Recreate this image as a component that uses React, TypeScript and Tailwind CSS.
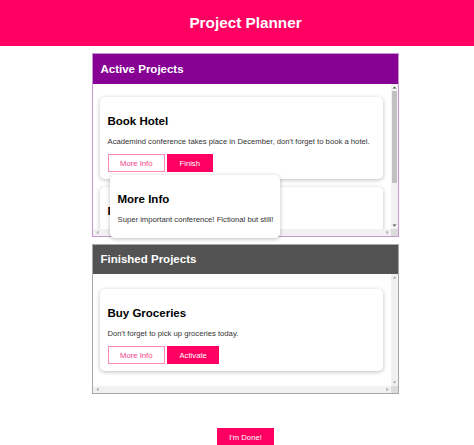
import React from "react";

const Arrow = ({ dir, dark }: { dir: "up" | "down" | "left" | "right"; dark?: boolean }) => {
  const pts: Record<string, string> = {
    up: "3.5,2.5 5.5,4.5 1.5,4.5",
    down: "1.5,2.5 5.5,2.5 3.5,4.5",
    left: "2.5,3.5 4.5,1.5 4.5,5.5",
    right: "2.5,1.5 4.5,3.5 2.5,5.5",
  };
  return (
    <svg width="7" height="7" viewBox="0 0 7 7" className="block shrink-0">
      <polygon points={pts[dir]} fill={dark ? "#505050" : "#a3a3a3"} />
    </svg>
  );
};

type CardProps = { title: string; text: string; action: string };

const Card = ({ title, text, action }: CardProps) => (
  <li className="list-none rounded-[5px] bg-white px-[7.5px] pt-[8px] pb-[7px] shadow-[0_1px_4px_rgba(0,0,0,0.26)]">
    <h2 className="mt-[10px] text-[11.5px] leading-[13px] font-bold text-black">{title}</h2>
    <p className="mt-[9px] text-[7.7px] leading-[9px] text-[#333] whitespace-nowrap">{text}</p>
    <div className="mt-[8px] flex gap-[2px]">
      <button className="h-[18px] border border-[#ff8ab5] bg-white px-[11.5px] text-[7.7px] leading-[9px] text-[#f2438a]">
        More Info
      </button>
      <button className="h-[18px] border border-[#ff0062] bg-[#ff0062] px-[11.5px] text-[7.7px] leading-[9px] text-white">
        {action}
      </button>
    </div>
  </li>
);

export default function App() {
  return (
    <div className="h-[445px] w-full overflow-hidden bg-white font-['Liberation_Sans',Arial,sans-serif]">
      <div className="relative w-[491px]">
        <header className="flex h-[46px] items-center justify-center bg-[#ff0062]">
          <h1 className="text-[15.3px] leading-[18px] font-bold text-white">Project Planner</h1>
        </header>

        {/* Active projects */}
        <section className="mx-auto mt-[7px] w-[307px] border border-[#c795cf]">
          <div className="flex h-[30px] items-center bg-[#850093] px-[7.5px]">
            <h2 className="text-[11.5px] leading-[13px] font-bold text-white">Active Projects</h2>
          </div>
          <div className="grid grid-cols-[1fr_7px] grid-rows-[145px_7px]">
            <div className="overflow-hidden">
              <ul className="flex flex-col gap-[8px] pt-[13px] pl-[7px] pr-[8px]">
                <Card
                  title="Book Hotel"
                  text="Academind conference takes place in December, don't forget to book a hotel."
                  action="Finish"
                />
                <Card title="Finish the Course" text="Finish the course within the next two weeks." action="Finish" />
              </ul>
            </div>
            <div className="flex flex-col bg-[#f1f1f1]">
              <Arrow dir="up" dark />
              <div className="mx-[1px] h-[92px] bg-[#c1c1c1]" />
              <div className="flex-1" />
              <Arrow dir="down" dark />
            </div>
            <div className="flex items-center justify-between bg-[#f1f1f1] pl-[1px]">
              <Arrow dir="left" />
              <Arrow dir="right" />
            </div>
            <div className="bg-[#dcdcdc]" />
          </div>
        </section>

        {/* Finished projects */}
        <section className="mx-auto mt-[7px] w-[307px] border border-[#a8a8a8]">
          <div className="flex h-[29px] items-center bg-[#535353] px-[7.5px]">
            <h2 className="text-[11.5px] leading-[13px] font-bold text-white">Finished Projects</h2>
          </div>
          <div className="grid grid-cols-[1fr_7px] grid-rows-[112px_7px]">
            <div className="overflow-hidden">
              <ul className="flex flex-col pt-[15px] pl-[7px] pr-[8px]">
                <Card title="Buy Groceries" text="Don't forget to pick up groceries today." action="Activate" />
              </ul>
            </div>
            <div className="flex flex-col justify-between bg-[#f1f1f1]">
              <Arrow dir="up" />
              <Arrow dir="down" />
            </div>
            <div className="flex items-center justify-between bg-[#f1f1f1] pl-[1px]">
              <Arrow dir="left" />
              <Arrow dir="right" />
            </div>
            <div className="bg-[#dcdcdc]" />
          </div>
        </section>

        <footer className="mt-[34px] flex justify-center">
          <button className="h-[18px] border border-[#ff0062] bg-[#ff0062] px-[11.5px] text-[7.7px] leading-[9px] text-white">
            I'm Done!
          </button>
        </footer>

        {/* Tooltip overlay */}
        <div className="absolute left-[110px] top-[175px] w-[170px] rounded-[5px] bg-white px-[7.5px] pt-[8px] pb-[14px] shadow-[0_1px_4px_rgba(0,0,0,0.26)]">
          <h2 className="mt-[10px] text-[11.5px] leading-[13px] font-bold text-black">More Info</h2>
          <p className="mt-[9px] text-[7.7px] leading-[9px] text-[#333] whitespace-nowrap">
            Super important conference! Fictional but still!
          </p>
        </div>
      </div>
    </div>
  );
}
